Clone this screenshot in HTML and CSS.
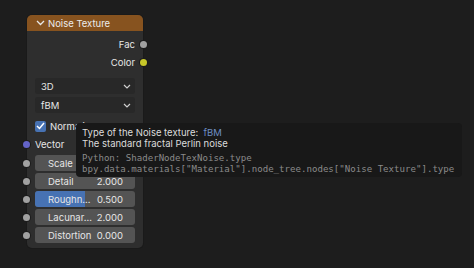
FILE: index.html
```html
<!DOCTYPE html>
<html lang="en-US">
  <head>
    <title>Noise Texture</title>
    <link rel="stylesheet" href="styles.css">
  </head>
  <body>
    <div class="node">
      <div class="node-header">
        <svg class="collapse" width="9" height="6" viewBox="0 0 9 6"><polyline points="1,1 4.5,4.5 8,1" fill="none" stroke="#e8e8e8" stroke-width="1.3"/></svg>
        <span>Noise Texture</span>
      </div>
      <div class="node-body">
        <div class="row out">Fac<span class="socket grey"></span></div>
        <div class="row out">Color<span class="socket yellow"></span></div>
        <div class="dropdown first">3D<svg width="8" height="5" viewBox="0 0 8 5"><polyline points="1,1 4,4 7,1" fill="none" stroke="#d0d0d0" stroke-width="1.2"/></svg></div>
        <div class="dropdown">fBM<svg width="8" height="5" viewBox="0 0 8 5"><polyline points="1,1 4,4 7,1" fill="none" stroke="#d0d0d0" stroke-width="1.2"/></svg></div>
        <div class="row check">
          <span class="box"><svg width="9" height="8" viewBox="0 0 9 8"><polyline points="1,4 3.5,6.5 8,1" fill="none" stroke="#fff" stroke-width="1.5"/></svg></span>
          Normalize
        </div>
        <div class="row in"><span class="socket purple"></span>Vector</div>
        <div class="slider"><span class="socket grey"></span><span class="label">Scale</span><span class="value">5.000</span></div>
        <div class="slider"><span class="socket grey"></span><span class="label">Detail</span><span class="value">2.000</span></div>
        <div class="slider">
          <span class="fill" style="width: 50%"></span>
          <span class="socket grey"></span><span class="label">Roughn…</span><span class="value">0.500</span>
        </div>
        <div class="slider"><span class="socket grey"></span><span class="label">Lacunar…</span><span class="value">2.000</span></div>
        <div class="slider"><span class="socket grey"></span><span class="label">Distortion</span><span class="value">0.000</span></div>
      </div>
    </div>

    <div class="tooltip">
      <div class="tip-line">Type of the Noise texture:&nbsp; <span class="tip-value">fBM</span></div>
      <div class="tip-line">The standard fractal Perlin noise</div>
      <div class="tip-python first">Python: ShaderNodeTexNoise.type</div>
      <div class="tip-python">bpy.data.materials["Material"].node_tree.nodes["Noise Texture"].type</div>
    </div>
  </body>
</html>
```

FILE: styles.css
```css
body {
  margin: 0;
  background-color: #1d1d1d;
  font-family: Inter, "DejaVu Sans", sans-serif;
  font-size: 9.5px;
  color: #e6e6e6;
  width: 474px;
  height: 268px;
  overflow: hidden;
  position: relative;
}

.node {
  margin: 15px 0 0 27px;
  width: 116px;
  background-color: #2e2e2e;
  border-radius: 5px;
  box-shadow: 0 0 0 1px #1a1a1a;
}
.node-header {
  height: 16px;
  background-color: #87531f;
  border-radius: 5px 5px 0 0;
  display: flex;
  align-items: center;
  padding-left: 9px;
  gap: 3px;
  color: #ececec;
  font-size: 9.5px;
}
.node-body {
  padding: 4px 8px 5px 8px;
}

.row {
  height: 18px;
  display: flex;
  align-items: center;
  position: relative;
}
.row.out {
  justify-content: flex-end;
}

.socket {
  position: absolute;
  width: 7px;
  height: 7px;
  border-radius: 50%;
  top: 50%;
  margin-top: -3.5px;
  box-shadow: 0 0 0 1px #1c1c1c;
}
.out .socket { right: -11.5px; }
.in .socket, .slider .socket { left: -12px; }
.socket.grey { background-color: #a1a1a1; }
.socket.yellow { background-color: #c7c729; }
.socket.purple { background-color: #6363c7; }

.dropdown {
  height: 16px;
  background-color: #282828;
  border-radius: 3px;
  display: flex;
  align-items: center;
  justify-content: space-between;
  padding: 0 4px 0 6px;
  margin-top: 3px;
}
.dropdown.first {
  margin-top: 7px;
}

.row.check {
  margin-top: 4px;
  gap: 4px;
}
.box {
  width: 11px;
  height: 11px;
  border-radius: 2px;
  background-color: #4772b3;
  display: flex;
  align-items: center;
  justify-content: center;
}

.slider {
  position: relative;
  height: 16px;
  margin-top: 2px;
  background-color: #545454;
  border-radius: 3px;
  display: flex;
  align-items: center;
  justify-content: space-between;
  padding: 0 12px 0 13px;
}
.slider .label,
.slider .value {
  position: relative;
}
.slider .fill {
  position: absolute;
  left: 0;
  top: 0;
  bottom: 0;
  background-color: #4772b3;
  border-radius: 3px 0 0 3px;
}

.tooltip {
  position: absolute;
  left: 76px;
  top: 123px;
  width: 380px;
  height: 50px;
  padding: 4px 0 0 6px;
  background-color: #181818;
  border-radius: 4px;
}
.tip-line {
  height: 11px;
  line-height: 11px;
  color: #dcdcdc;
}
.tip-value {
  color: #6e8fc4;
}
.tip-python {
  font-family: "DejaVu Sans Mono", monospace;
  font-size: 9.1px;
  color: #8a8a8a;
  height: 11px;
  line-height: 11px;
}
.tip-python.first {
  margin-top: 4px;
}
```
